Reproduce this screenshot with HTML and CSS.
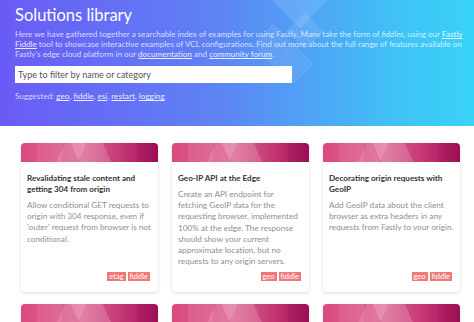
FILE: index.html
```html
<!DOCTYPE html>
<html>
<head>
<meta charset="utf-8">
<link rel="stylesheet" href="styles.css">
</head>
<body>
<header class="hero">
  <svg class="hero-deco" width="120" height="110" viewBox="0 0 120 110">
    <rect x="30" y="-20" width="40" height="40" transform="rotate(45 50 0)" fill="rgba(255,255,255,0.12)"/>
    <rect x="42" y="18" width="26" height="26" transform="rotate(45 55 31)" fill="rgba(255,255,255,0.1)"/>
    <rect x="8" y="30" width="30" height="30" transform="rotate(45 23 45)" fill="rgba(255,255,255,0.08)"/>
    <rect x="30" y="50" width="28" height="28" transform="rotate(45 44 64)" fill="rgba(255,255,255,0.08)"/>
  </svg>
  <h1 class="hero-title">Solutions library</h1>
  <p class="hero-text">Here we have gathered together a searchable index of examples for using Fastly. Many take the form of <em>fiddles</em>, using our <a href="#">Fastly Fiddle</a> tool to showcase interactive examples of VCL configurations. Find out more about the full range of features available on Fastly's edge cloud platform in our <a href="#">documentation</a> and <a href="#">community forum</a>.</p>
  <input class="hero-input" type="text" placeholder="Type to filter by name or category">
  <p class="hero-suggest">Suggested: <a href="#">geo</a>, <a href="#">fiddle</a>, <a href="#">esi</a>, <a href="#">restart</a>, <a href="#">logging</a></p>
</header>
<main class="grid">
  <article class="card">
    <div class="band"></div>
    <div class="card-body">
      <h2 class="card-title">Revalidating stale content and getting 304 from origin</h2>
      <p class="card-desc">Allow conditional GET requests to origin with 304 response, even if 'outer' request from browser is not conditional.</p>
      <div class="tags"><span class="tag">etag</span><span class="tag">fiddle</span></div>
    </div>
  </article>
  <article class="card">
    <div class="band"></div>
    <div class="card-body">
      <h2 class="card-title">Geo-IP API at the Edge</h2>
      <p class="card-desc">Create an API endpoint for fetching GeoIP data for the requesting browser, implemented 100% at the edge. The response should show your current approximate location, but no requests to any origin servers.</p>
      <div class="tags"><span class="tag">geo</span><span class="tag">fiddle</span></div>
    </div>
  </article>
  <article class="card">
    <div class="band"></div>
    <div class="card-body">
      <h2 class="card-title">Decorating origin requests with GeoIP</h2>
      <p class="card-desc">Add GeoIP data about the client browser as extra headers in any requests from Fastly to your origin.</p>
      <div class="tags"><span class="tag">geo</span><span class="tag">fiddle</span></div>
    </div>
  </article>
  <article class="card"><div class="band"></div><div class="card-body"></div></article>
  <article class="card"><div class="band"></div><div class="card-body"></div></article>
  <article class="card"><div class="band"></div><div class="card-body"></div></article>
</main>
</body>
</html>
```
FILE: styles.css
```css
html, body { margin: 0; padding: 0; }
body {
  font-family: "Lato", "Noto Sans", sans-serif;
  background: #fff;
  width: 474px;
  height: 322px;
  overflow: hidden;
}
.hero {
  position: relative;
  height: 126px;
  box-sizing: border-box;
  padding: 4px 0 0 15px;
  background: linear-gradient(90deg, #6a5bf6 0%, #5f82f4 45%, #3fc4f6 85%, #39d2f7 100%);
  color: rgba(255,255,255,0.8);
  overflow: hidden;
}
.hero-deco { position: absolute; left: 250px; top: 0; }
.hero-title {
  position: relative;
  margin: 0;
  font-size: 16.5px;
  font-weight: 400;
  color: #fff;
  line-height: 22px;
}
.hero-text {
  position: relative;
  margin: 3px 0 0 0;
  font-size: 8.1px;
  line-height: 10px;
  color: rgba(255,255,255,0.75);
}
.hero-text a, .hero-suggest a { color: rgba(255,255,255,0.88); text-decoration: underline; }
.hero-input {
  position: relative;
  display: block;
  margin-top: 7px;
  width: 277px;
  height: 17px;
  box-sizing: border-box;
  border: none;
  padding: 0 3px;
  font-family: inherit;
  font-size: 9px;
  background: #fff;
}
.hero-input::placeholder { color: #555; }
.hero-suggest {
  position: relative;
  margin: 8px 0 0 0;
  font-size: 8.2px;
  line-height: 10px;
  color: rgba(255,255,255,0.72);
}
.grid {
  display: grid;
  grid-template-columns: 137px 137px 137px;
  column-gap: 14px;
  row-gap: 12px;
  padding: 17px 0 0 21px;
}
.card {
  display: flex;
  flex-direction: column;
  background: #fff;
  border-radius: 4px;
  box-shadow: 0 1px 3px rgba(0,0,0,0.15);
  overflow: hidden;
}
.band {
  height: 19px;
  background:
    linear-gradient(115deg, transparent 0 30%, rgba(255,255,255,0.12) 30% 45%, transparent 45%),
    linear-gradient(65deg, transparent 0 40%, rgba(255,255,255,0.16) 40% 62%, transparent 62%),
    linear-gradient(90deg, transparent 0 12%, rgba(255,255,255,0.08) 12% 30%, transparent 30% 85%, rgba(0,0,0,0.06) 85%),
    linear-gradient(90deg, #d94a80 0%, #dc6692 45%, #c23472 75%, #a70d5a 100%);
}
.card-body {
  flex: 1;
  display: flex;
  flex-direction: column;
  padding: 11px 5px 11px 6px;
}
.card-title {
  margin: 0;
  font-size: 8.1px;
  line-height: 11px;
  font-weight: 700;
  color: #333;
}
.card-desc {
  margin: 5px 0 0 0;
  font-size: 8.2px;
  line-height: 11.2px;
  color: #8f8f8f;
}
.tags {
  margin-top: auto;
  display: flex;
  justify-content: flex-end;
  gap: 2px;
  padding-top: 5px;
  padding-right: 3px;
}
.tag {
  background: #f07878;
  color: #fff;
  font-size: 7.5px;
  line-height: 9px;
  padding: 0 2px;
}
```
